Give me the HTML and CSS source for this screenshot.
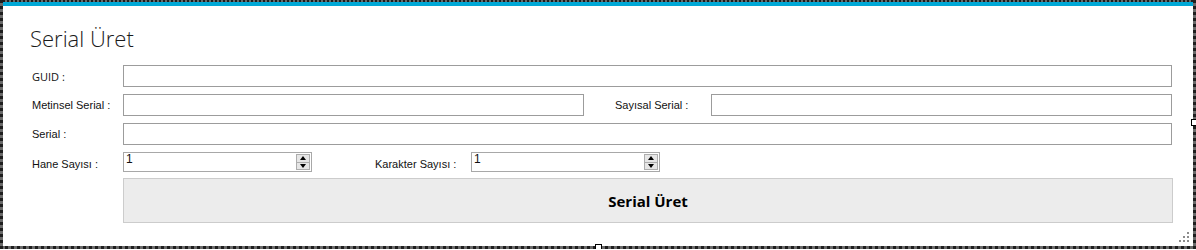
FILE: index.html
```html
<!DOCTYPE html>
<html>
<head>
<meta charset="utf-8">
<link rel="stylesheet" href="styles.css">
</head>
<body>
<div class="frame">
  <div class="form">
    <div class="titlebar"></div>
    <h1 class="title">Serial Üret</h1>
    <div class="rows">
      <div class="row">
        <label class="lbl lbl-first guid">GUID :</label>
        <div class="tb tb-full"></div>
      </div>
      <div class="row">
        <label class="lbl lbl-first">Metinsel Serial :</label>
        <div class="tb tb-half"></div>
        <label class="lbl lbl-second">Sayısal Serial :</label>
        <div class="tb tb-half"></div>
      </div>
      <div class="row">
        <label class="lbl lbl-first">Serial :</label>
        <div class="tb tb-full"></div>
      </div>
      <div class="row row-num">
        <label class="lbl lbl-first lbl-low">Hane Sayısı :</label>
        <div class="num">
          <span class="num-val">1</span>
          <div class="spin">
            <div class="spin-btn"><span class="arr-up"></span></div>
            <div class="spin-btn"><span class="arr-down"></span></div>
          </div>
        </div>
        <label class="lbl lbl-third lbl-low">Karakter Sayısı :</label>
        <div class="num">
          <span class="num-val">1</span>
          <div class="spin">
            <div class="spin-btn"><span class="arr-up"></span></div>
            <div class="spin-btn"><span class="arr-down"></span></div>
          </div>
        </div>
      </div>
      <div class="row row-btn">
        <button class="btn">Serial Üret</button>
      </div>
    </div>
    <div class="grip">
      <i></i><i></i><i></i><i></i><i></i><i></i>
    </div>
  </div>
  <div class="handle handle-right"></div>
  <div class="handle handle-bottom"></div>
</div>
</body>
</html>
```

FILE: styles.css
```css
html, body {
  margin: 0;
  padding: 0;
  background: #ffffff;
}

.frame {
  position: relative;
  width: 1196px;
  height: 249px;
  box-sizing: border-box;
  border-style: dotted;
  border-color: #1e1e1e;
  border-width: 2px 3px 3px 3px;
  background: #6a6a6a;
}

.form {
  position: relative;
  height: 100%;
  background: #ffffff;
  font-family: "Liberation Sans", Arial, sans-serif;
  color: #000;
}

.titlebar {
  height: 4px;
  background: #00a8d6;
}

.title {
  margin: 18px 0 0 27px;
  height: 28px;
  font-family: "Open Sans", sans-serif;
  font-weight: 300;
  font-size: 22px;
  line-height: 28px;
  color: #1a1a1a;
}

.rows {
  margin-top: 13px;
  display: flex;
  flex-direction: column;
  gap: 7px;
}

.row {
  display: flex;
  align-items: center;
  height: 22px;
}

.row-num {
  height: 20px;
}

.lbl {
  font-size: 11px;
  color: #111;
  white-space: nowrap;
}

.lbl-first {
  width: 91px;
  padding-left: 29px;
  flex: none;
}

.guid {
  font-family: "Open Sans", sans-serif;
  font-size: 11px;
}

.lbl-second {
  width: 96px;
  padding-left: 31px;
  flex: none;
}

.lbl-third {
  width: 96px;
  padding-left: 63px;
  flex: none;
}

.lbl-low {
  padding-top: 4px;
}

.tb {
  height: 22px;
  box-sizing: border-box;
  border: 1px solid #9c9c9c;
  background: #fff;
  flex: none;
}

.tb-full {
  width: 1049px;
}

.tb-half {
  width: 461px;
}

.num {
  width: 189px;
  height: 20px;
  box-sizing: border-box;
  border: 1px solid #a8a8a8;
  display: flex;
  justify-content: space-between;
  flex: none;
}

.num-val {
  font-size: 12px;
  line-height: 13px;
  padding-left: 2px;
  color: #111;
}

.spin {
  width: 14px;
  margin: 1px 1px 1px 0;
  display: flex;
  flex-direction: column;
}

.spin-btn {
  flex: 1;
  box-sizing: border-box;
  border: 1px solid #adadad;
  background: #e6e6e6;
  display: flex;
  align-items: center;
  justify-content: center;
}

.spin-btn + .spin-btn {
  border-top: none;
}

.arr-up {
  width: 0;
  height: 0;
  border-left: 3px solid transparent;
  border-right: 3px solid transparent;
  border-bottom: 4px solid #000;
}

.arr-down {
  width: 0;
  height: 0;
  border-left: 3px solid transparent;
  border-right: 3px solid transparent;
  border-top: 4px solid #000;
}

.row-btn {
  height: 45px;
  margin-top: -1px;
  padding-left: 120px;
}

.btn {
  width: 1050px;
  height: 45px;
  border: 1px solid #cccccc;
  background: #ececec;
  font-family: "Open Sans", sans-serif;
  font-weight: 700;
  font-size: 15px;
  color: #000;
  padding: 0;
}

.grip {
  position: absolute;
  right: 4px;
  bottom: 4px;
  width: 11px;
  height: 11px;
}

.grip i {
  position: absolute;
  width: 2px;
  height: 2px;
  background: #8c8c8c;
}

.grip i:nth-child(1) { right: 0; bottom: 0; }
.grip i:nth-child(2) { right: 4px; bottom: 0; }
.grip i:nth-child(3) { right: 8px; bottom: 0; }
.grip i:nth-child(4) { right: 0; bottom: 4px; }
.grip i:nth-child(5) { right: 4px; bottom: 4px; }
.grip i:nth-child(6) { right: 0; bottom: 8px; }

.handle {
  position: absolute;
  width: 5px;
  height: 5px;
  background: #fff;
  border: 1px solid #000;
}

.handle-right {
  right: -5px;
  top: 117px;
}

.handle-bottom {
  left: 592px;
  bottom: -5px;
}
```
